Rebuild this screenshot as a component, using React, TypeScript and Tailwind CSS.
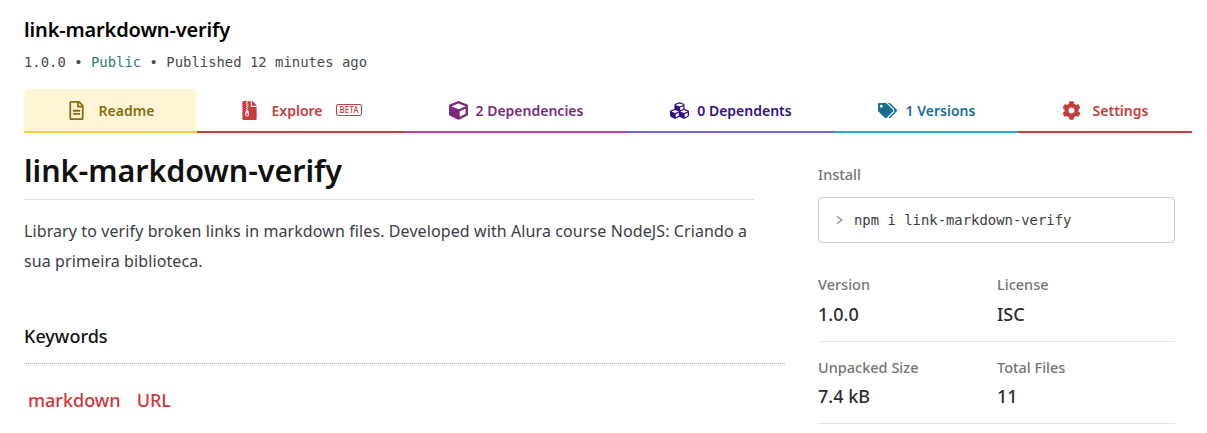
import { FaCog, FaCube, FaCubes, FaFileArchive, FaRegFileAlt, FaTags } from "react-icons/fa";

const tabs = [
  { label: "Readme", icon: FaRegFileAlt, width: "w-[173px]", gap: "gap-[13px]", text: "text-[#8a6d0b]", bar: "border-[#ffcd3a]", active: true },
  { label: "Explore", icon: FaFileArchive, width: "w-[208px]", gap: "gap-[13px]", text: "text-[#c93c3c]", bar: "border-[#cb3837]", beta: true },
  { label: "2 Dependencies", icon: FaCube, width: "w-[222px]", gap: "gap-[8px]", text: "text-[#7d2a7d]", bar: "border-[#c836b4]" },
  { label: "0 Dependents", icon: FaCubes, width: "w-[208px]", gap: "gap-[8px]", text: "text-[#33108a]", bar: "border-[#7a5ee8]" },
  { label: "1 Versions", icon: FaTags, width: "w-[183px]", gap: "gap-[9px]", text: "text-[#186d94]", bar: "border-[#29a8df]" },
  { label: "Settings", icon: FaCog, width: "w-[174px]", gap: "gap-[12px]", text: "text-[#c93c3c]", bar: "border-[#cb3837]" },
];

const stats = [
  [
    { label: "Version", value: "1.0.0" },
    { label: "License", value: "ISC" },
  ],
  [
    { label: "Unpacked Size", value: "7.4 kB" },
    { label: "Total Files", value: "11" },
  ],
];

export default function App() {
  return (
    <div className="w-[1207px] h-[433px] overflow-hidden bg-white pl-6 font-['Noto_Sans',sans-serif]">
      <h2 className="pt-[18px] text-[20px] leading-6 font-semibold tracking-[-0.15px] text-black">link-markdown-verify</h2>
      <div className="mt-[10px] flex gap-[8.4px] font-['DejaVu_Sans_Mono',monospace] text-[13.9px] leading-5 text-[#4a4a4a]">
        <span>1.0.0</span>
        <span>•</span>
        <span className="text-[#287d6e]">Public</span>
        <span>•</span>
        <span>Published 12 minutes ago</span>
      </div>

      <div className="mt-[17px] flex">
        {tabs.map((tab) => (
          <div
            key={tab.label}
            className={`${tab.width} ${tab.gap} h-[44px] flex items-center justify-center border-b-2 text-[14px] font-semibold ${tab.text} ${tab.bar} ${tab.active ? "bg-[#fff4d6] rounded-t-md" : ""}`}
          >
            <tab.icon className="text-[19px]" />
            <span>{tab.label}</span>
            {tab.beta && (
              <span className="rounded-[2px] border border-[#c93c3c] px-[3px] text-[8px] leading-[10px] font-medium">BETA</span>
            )}
          </div>
        ))}
      </div>

      <div className="flex">
        <div className="w-[761px]">
          <h1 className="mt-[16px] mr-[31px] border-b border-[#e1e1e1] pb-[7px] text-[30.5px] leading-[43px] font-semibold tracking-[-0.05px] text-[#111]">
            link-markdown-verify
          </h1>
          <p className="mt-4 mr-[31px] text-[16px] leading-[30px] tracking-[0.1px] text-[#3c3c44]">
            Library to verify broken links in markdown files. Developed with Alura course NodeJS: Criando a sua primeira biblioteca.
          </p>
          <h3 className="mt-[48px] border-b border-dotted border-[#b5b5b5] pb-[15px] text-[18px] leading-6 font-medium text-[#111]">Keywords</h3>
          <div className="mt-[24px] flex gap-[16px] pl-1 text-[18px] leading-6 font-medium text-[#cb3837]">
            <span>markdown</span>
            <span>URL</span>
          </div>
        </div>

        <div className="ml-[33px] w-[357px] pt-[31px]">
          <h3 className="text-[14.5px] leading-5 font-medium text-[#757575]">Install</h3>
          <div className="mt-[13px] flex h-[46px] items-center gap-[11px] rounded border border-[#cccccc] pl-[17px] font-['DejaVu_Sans_Mono',monospace] text-[13.9px] text-[#3c3c3c]">
            <svg width="7" height="10" viewBox="0 0 7 10" fill="none" stroke="#8c8c8c" strokeWidth="1.3">
              <path d="M1 1.5 6 5 1 8.5" />
            </svg>
            <span>npm i link-markdown-verify</span>
          </div>
          <div className="mt-[31px]">
            {stats.map((row, i) => (
              <div key={i} className={`grid grid-cols-[179px_1fr] border-b border-[#e5e5e5] ${i === 0 ? "h-[68px]" : "mt-[15px] h-[67px]"}`}>
                {row.map((stat) => (
                  <div key={stat.label}>
                    <div className="text-[14.5px] leading-5 font-medium text-[#757575]">{stat.label}</div>
                    <div className={`${i === 0 ? "mt-[8px]" : "mt-[7px]"} text-[18px] leading-6 font-medium text-[#2c2c2c]`}>{stat.value}</div>
                  </div>
                ))}
              </div>
            ))}
          </div>
        </div>
      </div>
    </div>
  );
}
